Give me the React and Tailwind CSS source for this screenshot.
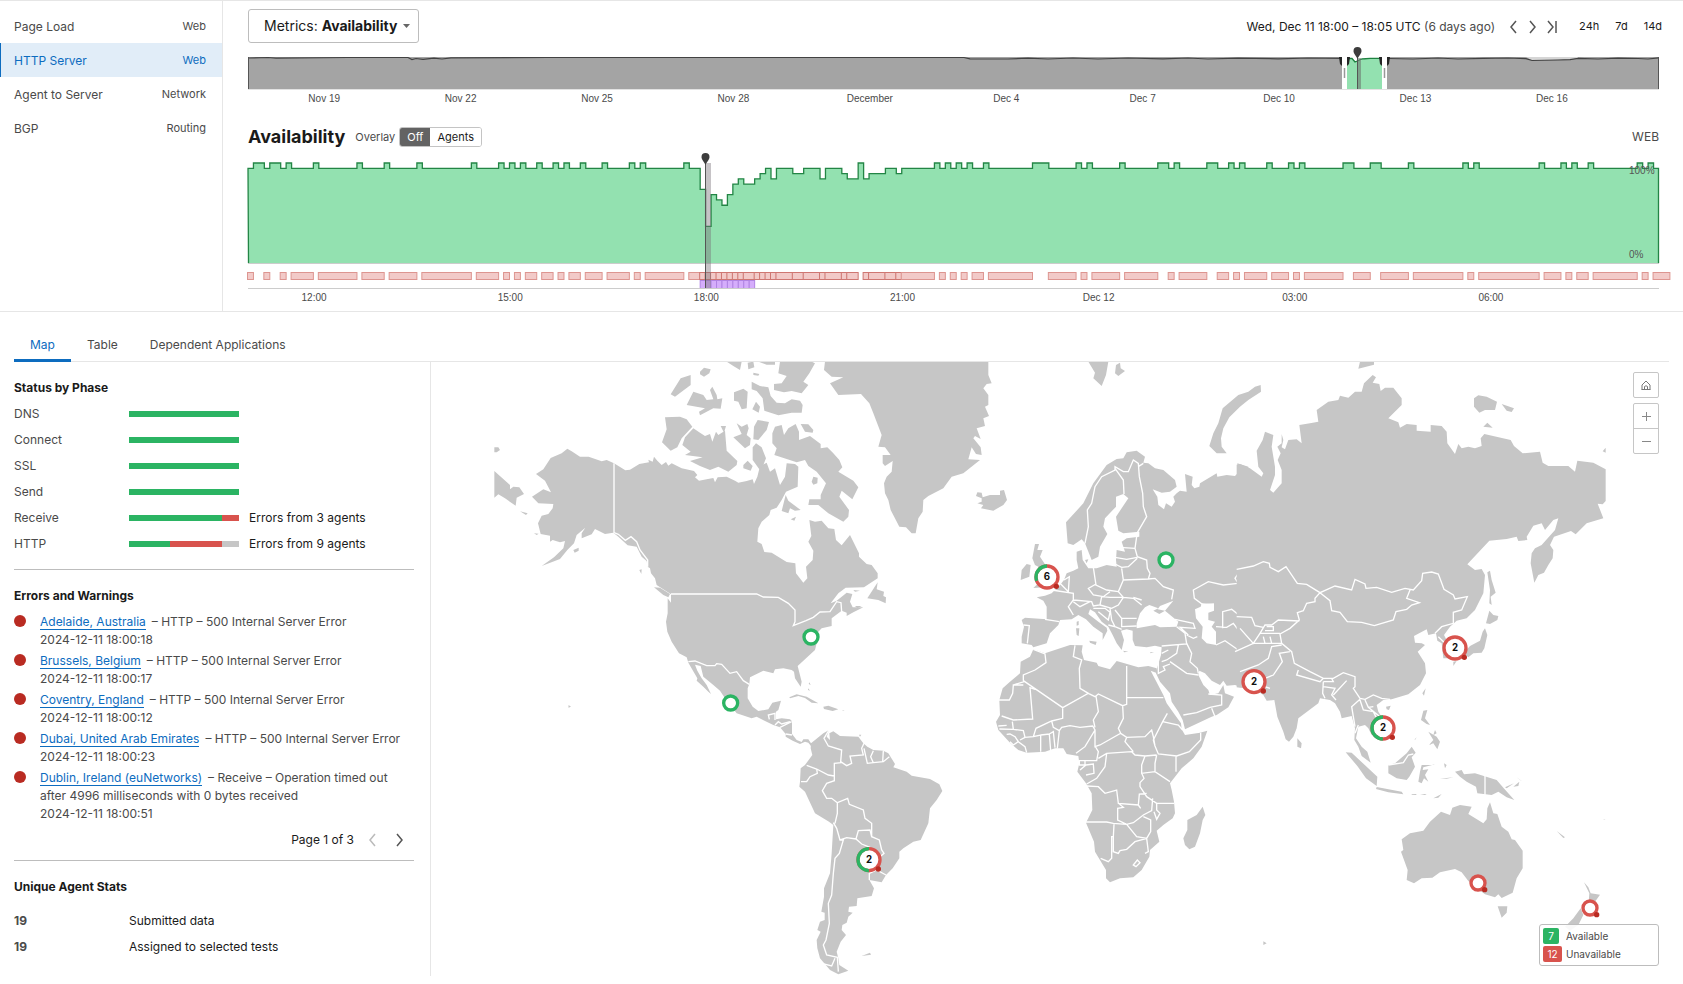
import { useState } from "react"

const tests = [
  { name: "Page Load", type: "Web" },
  { name: "HTTP Server", type: "Web" },
  { name: "Agent to Server", type: "Network" },
  { name: "BGP", type: "Routing" },
]

const overviewDates = ["Nov 19", "Nov 22", "Nov 25", "Nov 28", "December", "Dec 4", "Dec 7", "Dec 10", "Dec 13", "Dec 16"]
const hours = ["12:00", "15:00", "18:00", "21:00", "Dec 12", "03:00", "06:00"]

const phases = [
  { name: "DNS", ok: 110 },
  { name: "Connect", ok: 110 },
  { name: "SSL", ok: 110 },
  { name: "Send", ok: 110 },
  { name: "Receive", ok: 93, failed: 17, note: "Errors from 3 agents" },
  { name: "HTTP", ok: 41, failed: 52, skipped: 17, note: "Errors from 9 agents" },
]

const errors = [
  { agent: "Adelaide, Australia", detail: "HTTP – 500 Internal Server Error", time: "2024-12-11 18:00:18" },
  { agent: "Brussels, Belgium", detail: "HTTP – 500 Internal Server Error", time: "2024-12-11 18:00:17" },
  { agent: "Coventry, England", detail: "HTTP – 500 Internal Server Error", time: "2024-12-11 18:00:12" },
  { agent: "Dubai, United Arab Emirates", detail: "HTTP – 500 Internal Server Error", time: "2024-12-11 18:00:23" },
  {
    agent: "Dublin, Ireland (euNetworks)",
    detail: "Receive – Operation timed out after 4996 milliseconds with 0 bytes received",
    time: "2024-12-11 18:00:51",
  },
]

// rounds in which all 19 agents reached the server, [from, to)
const fullRounds = [
  [1, 3], [4, 6], [7, 8], [12, 13], [20, 21], [25, 26], [31, 32], [41, 42], [46, 47], [48, 49], [50, 51], [53, 54],
  [56, 57], [58, 59], [61, 62], [65, 66], [70, 71], [72, 73], [80, 81], [126, 127], [128, 129],
  [130, 131], [132, 133], [135, 136], [144, 147], [152, 153], [154, 155], [160, 161], [167, 169], [170, 171],
  [176, 178], [180, 181], [182, 183], [187, 188], [191, 192], [193, 194], [201, 203], [206, 208], [213, 214],
  [223, 224], [225, 226], [237, 238], [241, 242], [243, 244], [246, 247], [255, 256], [257, 258],
]

// the outage: [first round, agents available]
const outage = [
  [83, 14], [84, 7], [85, 13], [86, 12], [87, 11], [88, 13], [89, 15], [90, 16], [91, 15], [93, 16], [94, 17],
  [95, 18], [96, 16], [97, 18], [100, 17], [102, 18], [105, 16], [106, 18], [109, 17], [110, 16], [112, 19],
  [113, 16], [114, 17], [117, 18], [119, 17], [120, 18],
]

const AGENTS = 19
const ROUNDS = 259
const STEP = 1411 / ROUNDS

function availability() {
  const changes = []
  fullRounds.forEach(([from, to]) => changes.push([from, 19], [to, 18]))
  return [[0, 18], ...changes, ...outage].sort((a, b) => a[0] - b[0])
}

const levels = availability()
const runs = levels.map(([from, up], i) => ({
  x: from * STEP,
  w: ((i + 1 < levels.length ? levels[i + 1][0] : 261) - from) * STEP,
  y: 16 + (AGENTS - up) * 5.28,
  up,
}))

const outline = runs.map((r) => `L${r.x} ${r.y} H${Math.min(r.x + r.w, 1410.5)}`).join(" ")

function Pin({ x, y }) {
  return (
    <path
      transform={`translate(${x} ${y})`}
      d="M0 12 C-1 9 -4 7 -4 4 A4 4 0 0 1 4 4 C4 7 1 9 0 12Z"
      fill="#3d3d3d"
    />
  )
}

function OverviewChart() {
  const line =
    "M.5 15 L20 14.5 28 15.2 100 14.5 160 14.5 164 16.5 168 15.5 175 16.3 186 15.2 194 16 203 14.8 300 14.5 420 14.5 716 14.5 722 15.8 760 16 780 15.2 800 16 825 15 850 16 880 15 915 15.8 940 15 960 16 990 15.2 1030 15.8 1060 15 1095 15.4"
  const after =
    "M1140 15.5 L1165 16 1190 15 1210 16 1235 15.4 1260 15 1278 15.6 1284 17.5 1310 17 1322 16.6 1330 15.4 1350 16 1370 15.2 1390 15.5 1400 16 1410.5 14.8"
  return (
    <svg viewBox="0 0 1411 47" preserveAspectRatio="none" className="block w-full h-[47px] overflow-visible">
      <path d="M0 14 H1411 V46 H0Z" fill="#a4a4a4" />
      <path d="M1278 14 H1330 V15.4 L1322 16.6 1284 17.5Z" fill="#d6d6d6" />
      <path d="M1096 14 H1138 V46 H1096Z" fill="#93e1b0" />
      <path d="M1096 13 H1138 V15 L1118 15.5 1108 19 1104 15 H1096Z" fill="#fff" />
      <path d={line} fill="none" stroke="#424242" strokeWidth="1.2" />
      <path d={after} fill="none" stroke="#424242" strokeWidth="1.2" />
      <path d="M.5 14 V46 M1410.5 14 V46" stroke="#555" />
      <path d="M1098 15.5 L1104 15.5 1107 19 1114 16 1122 15.3 1136 15.3" fill="none" stroke="#1e8241" strokeWidth="1.3" />
      <path d="M1110 15 H1113 V46 H1110Z" fill="#6c7a72" fillOpacity=".6" />
      <path d="M1109.5 14 V46" stroke="#555" />
      {[1095, 1135].map((x) => (
        <g key={x}>
          <path d={`M${x - 4} 14 h3 v9 l-2 -2Z M${x + 7} 14 h-3 v9 l2 -2Z`} fill="#262626" />
          <path d={`M${x - 1} 13 h5 v33 h-5Z`} fill="#fff" />
          <path d={`M${x + 1.5} 25 v10`} stroke="#999" strokeWidth="1.5" />
        </g>
      ))}
      <Pin x={1109.5} y={4} />
      <path d="M0 46.5 H1411" stroke="#e2e2e2" />
    </svg>
  )
}

function AvailabilityChart() {
  return (
    <svg viewBox="0 0 1411 142" preserveAspectRatio="none" className="block w-full h-[142px] overflow-visible">
      <path d={`M.5 116 ${outline} V116Z`} fill="#93e1b0" />
      <path d={`M.5 116 ${outline} V116`} fill="none" stroke="#238545" strokeWidth="1.3" />
      <path d="M0 116.5 H1411" stroke="#ccc" />
      {runs
        .filter((r) => r.up < AGENTS)
        .map((r) => (
          <rect
            key={r.x}
            x={r.x - 0.5}
            y="125.5"
            width={r.w + 0.5}
            height="7"
            fill="#f2cac8"
            stroke={r.x > 82 * STEP && r.x < 119.5 * STEP ? "#cf7772" : "#dd9590"}
          />
        ))}
      {Array.from({ length: 10 }, (_, i) => (
        <rect key={i} x={(83 + i) * STEP} y="133.5" width={STEP} height="8" fill="#d5adfb" stroke="#b184e3" />
      ))}
      <path d="M457.5 16 H463 V142 H457.5Z" fill="#776f77" fillOpacity=".42" />
      <path d="M457.5 12 V142" stroke="#555" />
      <Pin x={457.5} y={6} />
      <path d="M0 141.5 H1411" stroke="#ccc" />
    </svg>
  )
}

function Chevron({ d = "M9 2 L4 8 L9 14", size = 12 }) {
  return (
    <svg width={size} height="16" viewBox="0 0 12 16" fill="none" stroke="currentColor" strokeWidth="1.5">
      <path d={d} />
    </svg>
  )
}

const markers = [
  { id: "US East", x: 1140, y: 825, ok: 1 },
  { id: "Mexico", x: 899, y: 1023, ok: 1 },
  { id: "Russia", x: 2205, y: 594, ok: 1 },
  { id: "Western Europe", x: 1848, y: 645, count: 6, ok: 0.31 },
  { id: "Gulf", x: 2469, y: 959, count: 2, ok: 0 },
  { id: "Japan", x: 3072, y: 858, count: 2, ok: 0 },
  { id: "Southeast Asia", x: 2856, y: 1098, count: 2, ok: 0.5 },
  { id: "Argentina", x: 1314, y: 1493, count: 2, ok: 0.5 },
  { id: "Adelaide", x: 3141, y: 1563, ok: 0 },
  { id: "New Zealand", x: 3477, y: 1638, ok: 0 },
]

function Marker({ id, x, y, count, ok }) {
  const r = count ? 33 : 21
  const dot = count ? 28 : 20
  return (
    <g transform={`translate(${x} ${y})`} role="img" aria-label={id}>
      <circle r={r} fill="#fff" stroke={ok === 1 ? "#2bb463" : "#d8534d"} strokeWidth="10" />
      {ok > 0 && ok < 1 && (
        <circle
          r={r}
          fill="none"
          stroke="#2bb463"
          strokeWidth="10"
          pathLength="100"
          strokeDasharray={`${ok * 100} 100`}
          strokeDashoffset={ok * 100 - 100}
          transform="rotate(-90)"
        />
      )}
      {ok < 1 && <circle cx={dot} cy={dot} r="8" fill="#b92b22" />}
      {count && (
        <text y="10" textAnchor="middle" fontSize="29" fontWeight="700" fill="#111" fontFamily="Inter, sans-serif">
          {count}
        </text>
      )}
    </g>
  )
}

function WorldMap() {
  return (
    <svg viewBox="0 0 3714 1842" className="block w-full h-auto" fill="#c6c6c6">
      {/* North and Central America */}
      <g transform="translate(147 -6)">
        <path d="M262 266 275 274 300 290 326 290 365 304 380 300 402 310 436 331 450 329 478 312 507 307 505 299 518 305 522 290 532 302 545 315 558 306 565 317 575 310 605 325 642 333 652 345 645 352 657 362 680 358 700 354 705 367 713 352 740 350 765 362 775 368 800 363 818 358 822 372 832 350 840 318 860 308 870 335 885 325 900 375 915 350 920 310 945 312 955 320 953 380 918 395 905 420 890 443 872 450 868 465 845 485 835 505 832 545 845 552 853 576 875 578 920 606 946 610 948 640 970 668 982 655 978 620 998 600 1000 572 985 545 994 528 988 480 1005 485 1025 482 1045 505 1063 507 1068 540 1085 556 1110 525 1137 580 1137 590 1160 612 1175 615 1193 640 1193 655 1152 682 1097 683 1075 700 1052 730 1070 722 1100 698 1117 702 1110 725 1118 742 1150 742 1120 757 1100 768 1100 758 1085 752 1055 775 1055 798 1025 805 1015 815 1010 850 1005 870 953 918 965 965 962 980 945 955 942 935 935 930 910 925 885 928 880 940 850 932 810 952 808 972 803 985 803 1015 818 1040 835 1053 865 1048 877 1028 903 1022 895 1050 888 1055 888 1078 905 1075 930 1078 936 1084 936 1122 950 1140 965 1146 970 1138 985 1138 993 1150 993 1158 985 1148 975 1145 960 1152 938 1142 917 1130 917 1122 900 1102 880 1095 855 1083 830 1070 815 1075 770 1060 735 1015 720 992 700 975 670 950 662 918 645 914 652 932 665 955 680 975 693 1002 685 995 670 980 650 962 652 955 625 908 620 892 597 880 575 845 562 815 558 785 563 760 563 715 573 728 573 703 545 685 530 675 525 655 513 640 510 625 503 620 500 603 485 590 470 560 443 556 415 530 400 518 375 522 345 507 335 523 305 535 305 520 316 503 290 525 282 550 262 570 240 597 185 618 222 592 250 565 255 543 240 547 218 540 210 545 210 527 182 522 174 490 185 467 205 462 218 445 220 432 175 430 156 410 190 388 213 397 195 362 168 342 190 328 212 294 245 280Z" />
        <path d="M43 262 55 262 60 270 50 277 43 277Z M43 333 90 375 90 388 100 380 118 382 132 402 110 413 107 437 75 415 55 403 43 413Z M120 454 143 460 138 465Z M162 520 176 521 170 525Z M280 570 296 563 296 572 284 578Z M478 630 485 628 484 642Z M522 682 540 683 570 702 565 712 550 705Z M265 1036 273 1039 266 1044Z" />
        <path d="M632 45 632 75 585 110 572 103 602 55Z M660 35 672 23 692 28 688 40 672 50 660 43Z M740 5 785 5 780 30 760 18Z M803 8 820 5 823 22 805 28Z M820 38 838 42 835 47 820 45Z M835 5 885 5 885 14 860 14Z M640 95 670 105 680 120 700 118 690 90 697 80 710 105 712 118 727 115 722 146 700 145 660 166 657 155 675 145 620 135Z M762 97 790 86 803 95 800 145 785 148 775 125 762 122Z M815 65 840 78 865 82 872 108 890 128 915 130 935 118 960 122 968 135 965 158 935 158 915 162 895 166 853 152 848 115 830 93 815 88Z M828 125 840 140 836 158 817 148Z M900 5 995 5 1005 10 988 40 970 65 985 75 965 100 935 93 912 97 882 90 882 72 905 70 920 48 895 40Z" />
        <path d="M555 172 600 170 620 178 637 200 605 235 592 262 572 272 546 247 560 208Z M640 205 660 218 675 228 690 222 697 245 708 215 715 225 735 212 740 272 772 303 770 315 745 335 715 320 690 330 660 318 630 303 668 292 615 285 632 275 607 255 615 232Z M722 198 738 198 732 218Z M770 190 785 200 802 192 806 205 800 225 812 235 810 255 795 265 760 232 785 222Z M833 180 867 186 860 210 835 240 820 238 822 200Z M828 250 845 262 858 295 850 315 838 328 818 300 818 262Z M790 315 803 302 818 318 812 332 790 325Z M905 195 912 225 925 205 947 192 957 215 957 240 990 228 1022 252 1022 265 1042 262 1060 280 1078 300 1087 322 1075 335 1120 362 1135 382 1117 418 1085 392 1078 410 1107 450 1105 470 1090 485 1045 460 1015 435 985 435 988 418 1022 418 1022 405 1038 370 1010 335 985 318 975 300 950 307 883 285 890 265 877 250 877 220 885 200Z M962 192 985 193 1000 210 998 218 975 215Z M1000 350 1013 353 1012 370 1000 374 995 365Z M917 405 925 422 962 450 945 452 930 445 925 460 905 453Z M932 478 948 470 943 482Z" />
        <path d="M1193 667 1190 688 1212 695 1210 708 1218 712 1217 730 1195 720 1162 715Z M1120 690 1140 692 1125 695Z M1125 738 1145 738 1132 745Z M928 1012 950 1003 980 1010 1015 1030 995 1028 975 1014 955 1008 930 1015Z M1030 1040 1045 1037 1075 1048 1058 1053 1045 1050 1032 1047Z M988 967 992 975 986 972Z M985 985 990 992 984 990Z M1088 1051 1094 1052 1088 1053Z" />
        <path
          d="M402 310V518L415 523 436 541 453 530 470 545 480 570 503 600 503 620 M573 702H830L850 711 895 712 925 730 945 750 945 785 940 797 978 782 1000 772 1020 756 1050 755 1070 725 1083 728 1085 755 M625 905 645 903 680 917 705 917 710 911 725 913 750 940 770 935 790 962 808 973 M868 1078 865 1065 885 1060 885 1080 M885 1095 895 1085 905 1092 930 1085 M900 1102 935 1085 M917 1122 936 1125"
          fill="none"
          stroke="#fff"
          strokeWidth="4"
        />
      </g>
      {/* South America and Africa */}
      <g transform="translate(1047 834)">
        <path d="M93 310 130 280 147 270 140 290 150 300 148 280 160 274 180 288 235 290 250 310 262 320 280 330 310 332 325 340 345 372 340 382 380 395 395 407 450 417 478 433 487 453 470 480 450 505 445 550 422 600 400 605 370 625 358 635 358 655 338 685 318 705 305 727 268 720 282 745 275 768 232 775 230 798 207 800 205 815 218 818 205 830 200 848 187 855 185 870 198 885 182 905 170 935 175 955 178 975 205 992 175 1003 150 990 120 955 112 925 110 900 122 875 112 870 120 845 134 840 134 818 124 815 132 770 132 745 150 700 155 640 160 555 147 545 105 520 75 455 58 440 60 425 62 385 75 375 97 345 92 325Z M245 948 270 938 273 944Z M237 284 244 284 240 290Z" />
        <path d="M760 28 795 40 870 15 908 16 905 35 912 60 950 68 955 78 990 88 1010 63 1075 82 1105 78 1130 85 1132 100 1112 92 1150 165 1160 190 1185 225 1203 250 1205 268 1215 285 1260 278 1282 272 1265 320 1240 355 1205 385 1170 430 1175 450 1182 485 1185 520 1178 535 1150 555 1130 572 1138 605 1110 630 1108 650 1085 690 1060 712 1020 715 990 727 978 715 978 690 945 635 942 605 918 548 937 510 935 460 918 430 892 395 898 370 895 348 860 342 850 325 825 325 795 335 740 338 715 330 690 308 655 270 648 245 660 225 658 180 668 145 690 125 720 100 722 65 750 50Z" />
        <path
          d="M160 548 170 565 180 600 190 600 178 640 165 655 160 700 155 765 145 790 148 850 138 900 130 915 140 945 172 952 175 995 M125 970 155 978 165 955 M180 600 200 593 228 597 245 612 270 622 M228 597 235 572 270 570 275 590 298 600 305 630 312 640 300 650 M275 590 275 550 255 535 250 510 208 493 203 475 172 488 172 520 165 550 M172 488 155 475 140 475 127 452 140 430 163 422 163 370 185 368 M163 408 145 405 110 387 80 376 M110 387 112 400 90 410 80 425 63 425 M147 270 132 295 145 318 185 330 182 365 200 377 215 370 210 348 250 345 245 325 252 310 M252 325 262 370 280 368 310 365 328 350 M280 332 272 350 280 368 M310 332 308 365 M268 720 268 700 290 690 318 705"
          fill="none"
          stroke="#fff"
          strokeWidth="4"
        />
        <path
          d="M760 28 795 42 798 68 765 90 730 105 730 122 M735 124 700 135 698 160 688 180H655 M698 135H730 M730 122 848 203 925 160 900 145 898 85 905 60 880 50 885 16 M765 148 750 143 758 237 700 240 665 228 M655 258 680 256 M658 267 700 268 730 272 735 292 760 290 768 265 815 243 848 235 848 203 M700 268 697 245 M680 283 690 282 705 290 715 305 700 315 690 305 M705 290 715 305 735 320 740 338 M735 292 720 300 M760 290 782 285 782 335 M782 285 808 282 812 332 M808 282 820 275 825 323 M815 243 820 262 838 272 832 325 M838 272 845 262 870 257 900 262 938 258 945 270 915 320 888 340 M925 160 945 170 955 162 1028 197 1040 193V78 M1040 173H1150 M948 168 955 215 940 240 945 262 M1028 197 1030 235 1015 265 1022 280 960 315 945 320 945 270 M945 318 955 335 950 362H898V375H915V362 M955 355 980 340 1055 335 1065 345 1095 348 1130 345 M1022 280 1040 292 1095 290 1115 270 1120 290 1125 318 M1040 292 1035 305 1060 335 M1125 318 1120 300 1148 245 1162 220 M1148 245 1195 255 1208 270 M1125 318 1135 342 1190 348 1228 335 1262 300V278 M1130 345 1125 370 1125 395 M1188 348V395 M1095 348 1085 375 1085 400 1125 395 1170 425 M1085 400 1092 415 1080 428 1080 440 1100 470 1130 490 1182 490 M980 340 975 380 950 415 920 432 M900 390 918 375 940 372 942 400 918 405 M920 438 955 440 975 460 1010 450 1015 490 1075 495 1082 505 M1075 495 1078 462 1100 460 M1015 490 1030 502 1013 505 1013 540 1040 553 1060 548 1090 525 1115 512 1118 475 M1130 490 1130 510 1140 520 1130 538 1122 515 M918 546H980L1000 550 1040 553 M1002 553 1000 590 995 590V655L985 665 962 655 M1000 590 1000 635 1015 640 1020 632 1040 628 1065 605 1100 595 1112 575 1112 540 1090 530 M1040 553 1070 590 1100 595 1105 635 1095 640 M1060 675 1072 660 1080 668 1068 680Z"
          fill="none"
          stroke="#fff"
          strokeWidth="4"
        />
      </g>
      <g transform="translate(2007 774)">
        <path d="M308 560 316 585 308 600 300 640 285 680 268 688 255 675 250 655 262 630 262 600 290 585Z" />
      </g>
      {/* Greenland, Europe and the Middle East */}
      <g transform="translate(1287 -6)">
        <path d="M-105 5-108 30-85 50-50 52-90 70-65 105 3 102 28 130 40 160 65 225 55 260 75 262 92 285 68 285 68 310 75 318 98 303 95 335 80 350 72 370 75 400 85 420 92 450 118 500 138 502 155 520 167 520 175 475 188 455 190 420 205 408 250 385 275 350 310 340 360 300 325 298 335 262 348 282 365 285 362 262 340 235 345 228 362 237 350 205 375 198 370 175 387 168 375 140 385 135 385 105 370 85 380 72 395 70 385 45 385 5Z" />
        <path d="M352 397 365 398 368 412 390 405 420 405 420 392 432 390 441 420 430 435 400 452 363 445 370 435 352 430 365 425 365 415 348 408Z M685 5H745L738 45 725 78 700 55 705 38Z M768 15 780 8 782 25 795 33 775 48 765 40Z M1202 75 1203 95 1165 120 1140 140 1108 172 1090 205 1083 235 1085 260 1100 280H1070L1048 258 1060 220 1075 190 1088 145 1135 105 1165 95 1185 80Z" />
        <path d="M525 552 537 552 532 570 548 570 540 590 553 610 562 630 580 645 575 670 555 682 520 684 535 670 530 650 535 620 525 615 517 595Z M500 612 512 615 508 650 482 660 485 630Z M650 785 656 783 656 795 650 797Z M648 805 658 805 656 828 650 825Z M688 842 710 845 707 855 690 848Z M790 872 805 875 792 877Z M870 877 882 876 872 880Z M675 600 685 598 680 610Z" />
        <path d="M800 277 830 272 855 290 850 308 865 310 885 325 910 330 945 360 950 380 930 395 905 398 878 388 892 410 895 435 912 448 918 430 935 440 945 425 940 410 950 400 960 392 980 395 975 342 998 350 995 375 1003 385 1018 380 1020 370 1070 340 1072 350 1100 345 1125 348 1133 340 1132 310 1165 320 1165 985 1150 983 1125 975 1100 977 1090 962 1080 975 1055 962 1035 940 1018 932 1015 945 1030 975 1045 990 1050 1005 1075 1000 1090 975 1095 1000 1122 1010 1105 1042 1070 1065 1055 1070 975 1108 968 1080 955 1055 935 1025 930 1000 900 965 888 940 892 922 903 885 905 862 885 857 860 862 825 858 818 840 818 812 800 808 783 812 792 840 785 870 770 850 758 825 745 800 725 785 705 757 690 748 685 762 715 785 740 803 742 812 728 840 728 820 700 800 678 778 655 765 635 778 600 780 595 795 570 820 560 850 520 862 515 855 485 850 485 830 492 800 485 780 495 773 560 778 560 740 550 722 530 712 555 707 575 700 600 675 612 660 620 640 640 632 655 625 650 600 650 575 665 570 668 600 685 625 710 625 740 615 770 620 768 600 770 570 795 575 785 545 800 535 838 530 838 515 790 520 775 512 768 470 805 415 790 402 768 410 768 440 735 475 730 500 742 522 720 560 715 590 695 600 675 550 665 538 640 555 623 550 618 487 670 430 700 370 740 315 770 297 790 295Z" />
        <path
          d="M1005 748 1022 740 1025 730 1062 732 1062 752 1045 758 1045 780 1065 785 1055 800 1068 815 1068 855 1040 850 1025 835 1028 800 1008 775Z M830 790 840 760 855 742 868 735 895 745 880 752 898 762 915 752 955 785 950 800 900 802 885 795 830 805Z M893 748 900 738 940 722 915 752Z"
          fill="#fff"
        />
        <path
          d="M675 550 685 500 682 450 695 430 705 380 725 350 765 330 765 320 790 335 805 335 820 300 835 310 838 350 848 400 850 440 860 470 832 518 M765 325 790 360 792 402 M850 310 835 320 M830 530 825 565 778 562 M825 565 832 590 860 600 862 625 870 640 865 657 790 660 785 625 M765 592 800 598 832 592 M832 595 805 620 785 622 765 612 M865 657 885 655 910 680 940 690 935 718 M790 660 775 695 790 712 820 715 845 735 M820 712 845 720 M700 622 708 675 740 690 775 695 M708 672 685 685 700 705 730 710 750 695 M575 690 640 700 640 720 625 740 640 765 M600 670 625 695 628 650 612 660 M640 720 695 725 700 738 720 735 725 710 750 712 790 712 M640 725 660 740 690 725 M720 735 755 745 775 735 790 712 M700 745 735 745 750 757 745 780 715 755 M750 745 755 780 765 800 745 795 M765 750 785 775 830 775 M785 775 785 800 830 798 M765 800 785 808 M555 778 598 785 M490 795 508 797 502 850 M905 858 980 852 975 820 950 800 M980 825 1000 835 1012 830 M945 778 1000 790 1005 805 960 802 985 825 M980 850 995 880 990 905 1012 925 1015 940 M955 855 950 880 920 900 905 905 M905 880 925 870 M930 905 980 940 1015 945 M895 905 895 940 915 930 910 920 930 912 M1068 855 1095 842 1135 870 1135 930 1165 945 M1062 732 1030 735 1003 715 1000 690 1045 665 1090 675 1135 670 1125 655 1142 630 1170 620 M1088 805V755L1115 748 1145 772 1175 772 M1068 800 1100 802 1120 790 1150 830 1180 850 1135 870 M970 1065 1010 1058 1050 1042 1085 1035 1085 1005 1045 1002 M1055 1045 1065 1070"
          fill="none"
          stroke="#fff"
          strokeWidth="4"
        />
      </g>
      {/* Asia and Oceania */}
      <g transform="translate(2427 -6)">
        <path d="M-10 314 0 312 30 325 65 350 70 340 55 320 50 272 68 240 75 215 100 225 95 260 105 320 105 345 90 390 100 398 125 370 125 330 113 300 122 280 112 260 125 250 125 222 130 240 125 262 135 268 145 240 170 238 185 250 178 195 210 190 235 185 230 150 265 125 295 120 300 107 325 113 345 95 365 95 372 70 398 45 408 52 398 68 418 72 422 93 435 83 460 83 485 115 485 135 445 175 475 187 480 203 500 192 530 195 530 212 572 215 572 195 605 198 620 215 622 250 645 282 655 252 665 265 685 260 705 265 725 258 722 235 733 222 812 240 822 258 848 280 900 275 908 308 925 318 985 318 1005 335 1012 302 1060 308 1097 328V423L1088 433 1073 431 1090 475 1040 490 1007 523 993 513 942 530 930 555 940 570 938 595 925 615 912 638 895 645 883 668 872 610 875 580 885 565 905 555 945 510 955 475 940 480 915 510 905 490 880 497 860 530 862 540 835 543 830 530 800 537 748 542 682 613 705 630 725 627 735 645 730 700 705 750 680 775 650 782 630 800 612 825 630 860 635 895 610 895 605 850 592 842 588 820 565 825 560 808 522 828 525 848 545 850 555 855 533 875 555 910 558 940 540 975 505 1003 455 1018 430 1020 410 1035 415 1055 435 1085 425 1110 395 1125 385 1105 375 1095 355 1100 348 1135 365 1160 382 1175 392 1208 365 1188 355 1160 343 1140 345 1105 335 1068 305 1075 300 1055 285 1030 270 1020 240 1015 235 1030 175 1075 170 1105 160 1130 147 1145 137 1138 130 1115 112 1070 103 1020 80 1022 70 1005 40 985 0 983 -10 982Z" />
        <path d="M360 5H402V14L355 26Z M702 115 715 106 740 110 771 125 765 150 735 150 718 158 702 140Z M785 132 822 145 815 156 800 152Z M730 200 742 188 758 203Z M1097 263V278L1088 274Z M742 637 750 632 755 660 767 698 752 710 755 735 748 730 750 690Z M748 752 760 765 775 768 772 780 750 792 738 790Z M735 805 742 825 733 865 725 878 700 880 685 892 670 880 690 858 720 842 728 815Z M640 905 650 903 640 918Z M547 1000 557 985 552 1007Z M438 1040 452 1037 447 1050 440 1048Z" />
        <path d="M172 1135 185 1150 183 1165 172 1160Z M317 1177 335 1178 388 1228 412 1250 410 1278 378 1255 352 1218Z M410 1281 485 1295 490 1303 445 1297 408 1287Z M515 1303 530 1302 528 1305 515 1305Z M540 1302 560 1302 555 1305Z M580 1315 605 1302 595 1313Z M445 1215 465 1210 500 1180 515 1160 527 1178 515 1192 525 1220 508 1250 500 1260 470 1255 445 1240Z M545 1215 580 1215 585 1213 550 1222 548 1230 565 1228 555 1245 565 1265 552 1255 545 1270 535 1265 540 1235Z M550 1052 562 1050 555 1075 570 1095 560 1092 543 1080Z M565 1115 590 1130 600 1145 592 1168 580 1150 567 1155 580 1140Z M585 1110 590 1120 580 1125Z M612 1210 620 1215 615 1225Z M525 1140 530 1132 524 1138Z M645 1235 665 1230 672 1243 705 1240 770 1260 790 1283 823 1320 800 1312 775 1295 755 1305 712 1300 708 1280 680 1265 660 1250Z M795 1282 822 1270 800 1285Z M828 1250 848 1265 840 1260Z M820 1280 838 1265 835 1278Z M600 1256 640 1252 620 1256Z M868 1278 876 1284Z M920 1305 925 1310Z M950 1413 975 1432 970 1434Z M973 1365 978 1367Z M1090 1379 1097 1377 1092 1380Z M70 1744 80 1750 70 1755Z" />
        <path d="M603 1355 630 1365 637 1343 660 1335 695 1340 685 1362 730 1390 740 1378 742 1345 750 1327 760 1360 772 1362 785 1400 805 1415 815 1438 825 1440 848 1472V1525L830 1555 818 1598 785 1614 775 1603 765 1612 735 1603 705 1580 685 1563 665 1537 645 1527 600 1537 577 1553 545 1555 522 1570 500 1560 503 1530 483 1475 490 1470 485 1438 510 1420 550 1412 570 1385Z M773 1639H802L800 1658 785 1673Z M1032 1567 1045 1582 1052 1600 1080 1604 1065 1625 1045 1640 1048 1600Z M1022 1645 1030 1665 1015 1695 990 1712 975 1700 1000 1675Z" />
        <path
          d="M-10 628 40 618 70 605 88 610 90 622 115 635 138 620 172 670 200 673 240 698 285 678 335 690 345 658 375 672 378 685 410 682 455 697 495 685 520 690 545 662 548 640 575 636 595 642 612 688 640 705 645 717 682 710 665 750 640 757 640 790 605 800 585 820 M240 698 270 722 275 752 300 757 322 785 365 787 403 797 460 780 468 755 500 748 515 735 538 728 500 715 510 690 M240 698 225 715 225 725 200 730 190 752 172 758 178 780 150 805 120 822 125 850 155 875 163 910 210 935 250 955 280 955 310 938 345 950 345 980 340 985 360 1015 375 1018 400 1005 425 1015 450 1018 M178 783 115 780 95 795 75 795 60 820H120 M80 800 100 800 100 812 75 812 M-10 770 35 772 45 797 70 802 M0 805 40 850 60 820 M-15 875 40 850 90 850 125 850 M70 830 75 850 M90 830 95 850 M125 855 95 860 85 895 55 915 0 935 M150 875 118 880 127 905 100 945 75 955 75 980 90 985 M175 930 170 945 240 965 250 955 M250 965 280 965 275 955 M250 965 248 1000 255 1015 M250 980 285 985 275 1005 288 1020 M280 1005 320 962 M360 1018 335 1040 345 1100 M360 1020 370 1050 400 1055 410 1075 M375 1020 385 1042 420 1070 M385 1042 400 1040 M355 1095 345 1120 M445 1215 490 1208 505 1185 520 1182 M735 1245V1308 M595 830 615 850"
          fill="none"
          stroke="#fff"
          strokeWidth="4"
        />
      </g>
      {markers.map((m) => (
        <Marker key={m.id} {...m} />
      ))}
    </svg>
  )
}

export default function App() {
  const [test, setTest] = useState("HTTP Server")
  const [tab, setTab] = useState("Map")
  const [overlay, setOverlay] = useState("Off")

  return (
    <div className="min-h-screen bg-white font-['Inter',sans-serif] text-xs text-[#4a4a4a]">
      <div className="flex border-y border-[#e6e6e6]">
        <nav className="w-[223px] shrink-0 border-r border-[#e6e6e6] pt-2">
          {tests.map((t) => (
            <button
              key={t.name}
              onClick={() => setTest(t.name)}
              className={`flex w-full h-[34px] items-center justify-between border-l pl-[13px] pr-4 pt-px ${
                t.name === test ? "border-[#0d6cbf] bg-[#e1edf8] text-[#0d6cbf]" : "border-transparent"
              }`}
            >
              <span>{t.name}</span>
              <span className="text-[11px]">{t.type}</span>
            </button>
          ))}
        </nav>

        <section className="flex-1 min-w-0 pl-[25px] pr-6 pt-2 pb-[5px]">
          <div className="flex items-center justify-between">
            <button
              aria-haspopup="listbox"
              className="flex h-[34px] items-center rounded-[3px] border border-[#bdbdbd] pl-[15px] pr-2 text-sm text-[#1a1a1a]"
            >
              <span>
                Metrics: <b>Availability</b>
              </span>
              <svg width="7" height="4" viewBox="0 0 7 4" className="ml-1.5" fill="#666">
                <path d="M0 0H7L3.5 4Z" />
              </svg>
            </button>
            <div className="-mr-[3px] flex items-center pt-px text-[#1a1a1a]">
              <span>
                Wed, Dec 11 18:00 – 18:05 UTC <span className="text-[#4a4a4a]">(6 days ago)</span>
              </span>
              <div className="ml-3 flex gap-2 text-[#555]">
                <button aria-label="Previous round">
                  <Chevron />
                </button>
                <button aria-label="Next round">
                  <Chevron d="M3 2 L8 8 L3 14" />
                </button>
                <button aria-label="Latest round">
                  <Chevron d="M1 2 L6 8 L1 14 M9 2 V14" />
                </button>
              </div>
              <div className="ml-5 flex gap-4 text-[11px]">
                <button>24h</button>
                <button>7d</button>
                <button>14d</button>
              </div>
            </div>
          </div>

          <OverviewChart />
          <div className="flex pt-px pl-2 pr-[39px] font-['Liberation_Sans',sans-serif] text-[10px] leading-4">
            {overviewDates.map((d) => (
              <span key={d} className="flex-1 text-center">
                {d}
              </span>
            ))}
          </div>

          <div className="mt-5 flex h-5 items-center">
            <h1 className="text-lg leading-5 font-bold text-[#1a1a1a]">Availability</h1>
            <span className="ml-2.5 mr-1 text-[11px]">Overlay</span>
            <div className="flex h-5 overflow-hidden rounded-[3px] border border-[#c4c4c4] text-[11px] leading-[18px]">
              {["Off", "Agents"].map((o) => (
                <button
                  key={o}
                  onClick={() => setOverlay(o)}
                  className={`px-[7px] ${o === overlay ? "bg-[#636363] text-white" : "bg-white text-[#1a1a1a]"}`}
                >
                  {o}
                </button>
              ))}
            </div>
            <span className="ml-auto">WEB</span>
          </div>

          <div className="relative">
            <AvailabilityChart />
            <div className="absolute right-1 top-[18px] w-[26px] font-['Liberation_Sans',sans-serif] text-[10px] leading-3 text-[#555]">
              <div>100%</div>
              <div className="mt-[72px]">0%</div>
            </div>
          </div>
          <div className="-ml-8 mr-[70px] flex pt-px font-['Liberation_Sans',sans-serif] text-[10px] leading-4">
            {hours.map((h) => (
              <span key={h} className="flex-1 text-center">
                {h}
              </span>
            ))}
          </div>
        </section>
      </div>

      <div className="mx-3.5 flex h-[50px] items-end border-b border-[#e6e6e6]">
        {["Map", "Table", "Dependent Applications"].map((t) => (
          <button
            key={t}
            onClick={() => setTab(t)}
            className={`-mb-px h-8 border-b-3 px-4 ${
              t === tab ? "border-[#0d6cbf] text-[#0d6cbf]" : "border-transparent"
            }`}
          >
            {t}
          </button>
        ))}
      </div>

      <div className="mr-3.5 flex">
        <aside className="w-[431px] shrink-0 border-r border-[#e6e6e6] pl-3.5 pr-4">
          <h2 className="pt-[17px] font-bold leading-[18px] text-[#1a1a1a]">Status by Phase</h2>
          <div className="mt-1 border-b border-[#bdbdbd] pb-3">
            {phases.map((p) => (
              <div key={p.name} className="flex h-[26px] items-center">
                <span className="w-[115px]">{p.name}</span>
                <div className="flex h-1.5 w-[110px]">
                  <div className="bg-[#2bb463]" style={{ width: p.ok }} />
                  <div className="bg-[#d8534d]" style={{ width: p.failed || 0 }} />
                  <div className="bg-[#c6c6c6]" style={{ width: p.skipped || 0 }} />
                </div>
                <span className="ml-2.5 text-[#1a1a1a]">{p.note}</span>
              </div>
            ))}
          </div>

          <h2 className="mt-[17px] font-bold leading-[18px] text-[#1a1a1a]">Errors and Warnings</h2>
          <ul className="mt-2 space-y-[3px]">
            {errors.map((e) => (
              <li key={e.agent} className="flex leading-[18px]">
                <span className="mt-[2px] mr-3.5 size-3 shrink-0 rounded-full bg-[#b92b22]" />
                <div>
                  <a href="#agent" className="mr-1.5 border-b border-[#0d6cbf] text-[#0d6cbf]">
                    {e.agent}
                  </a>
                  {`– ${e.detail}`}
                  <div>{e.time}</div>
                </div>
              </li>
            ))}
          </ul>
          <div className="flex h-[38px] items-center justify-end border-b border-[#bdbdbd] pr-2 pb-1 text-[#1a1a1a]">
            <span>Page 1 of 3</span>
            <button aria-label="Previous page" className="ml-3 text-[#bbb]">
              <Chevron />
            </button>
            <button aria-label="Next page" className="ml-4 text-[#555]">
              <Chevron d="M3 2 L8 8 L3 14" />
            </button>
          </div>

          <h2 className="mt-[17px] font-bold leading-[18px] text-[#1a1a1a]">Unique Agent Stats</h2>
          <div className="mt-3 text-[#1a1a1a]">
            {["Submitted data", "Assigned to selected tests"].map((s) => (
              <div key={s} className="flex h-[26px] items-center">
                <b className="w-[115px] text-[#4a4a4a]">19</b>
                {s}
              </div>
            ))}
          </div>
        </aside>

        <section className="relative flex-1 min-w-0">
          <WorldMap />
          <div className="absolute right-2.5 top-2.5 text-[#8a8a8a]">
            <button
              aria-label="Reset map"
              className="flex size-[26px] items-center justify-center rounded-xs border border-[#c6c6c6] bg-white"
            >
              <svg width="10" height="10" viewBox="0 0 10 10" fill="none" stroke="#777">
                <path d="M1 9.5V5L5 1L9 5V9.5 M.5 9.5H9.5 M3.5 9V6.5Q5 5 6.5 6.5V9" />
              </svg>
            </button>
            <div className="mt-[5px] rounded-xs border border-[#c6c6c6] bg-white">
              <button aria-label="Zoom in" className="flex h-[25px] w-6 items-center justify-center border-b border-[#c6c6c6]">
                <svg width="9" height="9" viewBox="0 0 9 9" stroke="#888">
                  <path d="M4.5 0V9M0 4.5H9" />
                </svg>
              </button>
              <button aria-label="Zoom out" className="flex h-6 w-6 items-center justify-center">
                <svg width="9" height="9" viewBox="0 0 9 9" stroke="#888">
                  <path d="M0 4.5H9" />
                </svg>
              </button>
            </div>
          </div>
          <div className="absolute bottom-2.5 right-2.5 w-[120px] rounded-[3px] border border-[#bdbdbd] bg-white/90 p-[3px] text-[10px] leading-4">
            <div className="flex gap-[7px]">
              <span className="w-4 rounded-xs bg-[#2bb463] text-center text-white">7</span>
              Available
            </div>
            <div className="mt-[2px] flex gap-1">
              <span className="w-[19px] rounded-xs bg-[#d8534d] text-center text-white">12</span>
              Unavailable
            </div>
          </div>
        </section>
      </div>
    </div>
  )
}
